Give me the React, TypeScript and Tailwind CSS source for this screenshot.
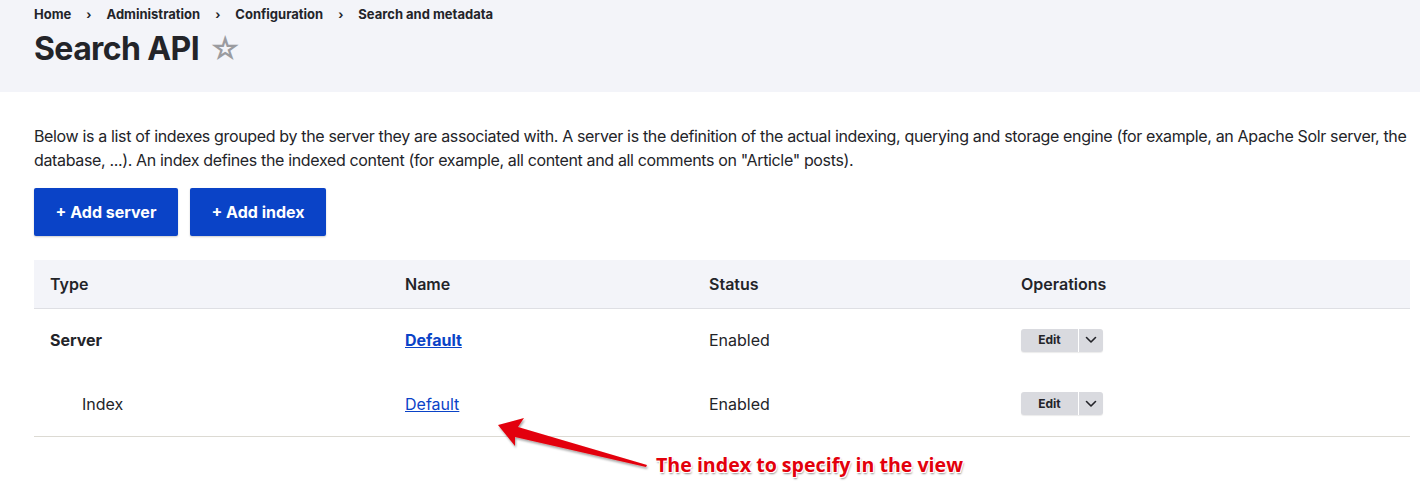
import React from 'react';

const Chevron = () => (
  <svg width="12" height="8" viewBox="0 0 12 8" fill="none">
    <path d="M1.5 1.5 6 6l4.5-4.5" stroke="#232429" strokeWidth="1.6" strokeLinecap="round" strokeLinejoin="round" />
  </svg>
);

const DropButton = () => (
  <div className="flex h-[23px] w-[82px] overflow-hidden rounded-[3px] bg-[#d9dadf] shadow-[0_1px_1px_rgba(0,0,0,0.08)]">
    <span className="flex w-[57px] items-center justify-center text-[12px] font-bold text-[#232429]">Edit</span>
    <span className="w-px bg-white" />
    <span className="flex flex-1 items-center justify-center">
      <Chevron />
    </span>
  </div>
);

const rows = [
  { type: 'Server', bold: true },
  { type: 'Index', bold: false },
];

export default function App() {
  return (
    <div className="relative h-[500px] w-[1420px] overflow-hidden bg-white font-['Inter',sans-serif] text-[#232429]">
      <div className="h-[92px] bg-[#f3f4f9] px-[34px] pt-[6px]">
        <nav className="flex items-center gap-[15px] text-[13px] font-bold leading-[17px]">
          <span>Home</span>
          <span className="text-[12px]">›</span>
          <span>Administration</span>
          <span className="text-[12px]">›</span>
          <span>Configuration</span>
          <span className="text-[12px]">›</span>
          <span>Search and metadata</span>
        </nav>
        <h1 className="mt-[6px] flex items-center text-[32px] font-bold leading-[40px] tracking-[-0.6px]">
          Search API
          <span className="ml-[10px] text-[31px] font-normal text-[#9a9ba0]">☆</span>
        </h1>
      </div>

      <div className="px-[34px] pt-[32px]">
        <p className="text-[16px] leading-[24px] tracking-[-0.35px]">
          <span className="whitespace-nowrap">
            Below is a list of indexes grouped by the server they are associated with. A server is the definition of the actual indexing, querying and storage engine (for example, an Apache Solr server, the
          </span>
          <br />
          database, ...). An index defines the indexed content (for example, all content and all comments on "Article" posts).
        </p>

        <div className="mt-[16px] flex gap-[12px]">
          <button className="h-[48px] w-[144px] rounded-[2px] bg-[#0a43c7] text-[16px] font-bold text-white shadow-[0_1px_2px_rgba(0,0,0,0.2)]">
            + Add server
          </button>
          <button className="h-[48px] w-[136px] rounded-[2px] bg-[#0a43c7] text-[16px] font-bold text-white shadow-[0_1px_2px_rgba(0,0,0,0.2)]">
            + Add index
          </button>
        </div>

        <table className="mt-[24px] w-[1376px] table-fixed border-collapse text-left text-[16px]">
          <colgroup>
            <col className="w-[355px]" />
            <col className="w-[304px]" />
            <col className="w-[312px]" />
            <col />
          </colgroup>
          <thead>
            <tr className="h-[48px] border-b border-[#dedfe4] bg-[#f3f4f9]">
              <th className="pl-[16px] font-semibold">Type</th>
              <th className="pl-[16px] font-semibold">Name</th>
              <th className="pl-[16px] font-semibold">Status</th>
              <th className="pl-[16px] font-semibold">Operations</th>
            </tr>
          </thead>
          <tbody>
            {rows.map((r) => (
              <tr key={r.type} className={r.bold ? 'h-[64px]' : 'h-[64px] border-b border-[#dcdad3]'}>
                <td className={r.bold ? 'pl-[16px] font-bold' : 'pl-[48px]'}>{r.type}</td>
                <td className="pl-[16px]">
                  <a className={r.bold ? 'font-bold text-[#0a43c7] underline' : 'text-[#0a43c7] underline'}>Default</a>
                </td>
                <td className="pl-[16px]">Enabled</td>
                <td className="pl-[16px]">
                  <DropButton />
                </td>
              </tr>
            ))}
          </tbody>
        </table>
      </div>

      <svg className="absolute left-[490px] top-[405px]" width="170" height="70" viewBox="0 0 170 70">
        <defs>
          <filter id="sh" x="-10%" y="-20%" width="130%" height="160%">
            <feDropShadow dx="1" dy="2" stdDeviation="1.2" floodColor="#000" floodOpacity="0.35" />
          </filter>
        </defs>
        <path d="M8 20 L34 13 L28 22 L157 60 L156 62 L25 32 L25 41 Z" fill="#e3000b" filter="url(#sh)" />
      </svg>

      <div
        className="absolute left-[656px] top-[452px] font-['Open_Sans',sans-serif] text-[19.6px] font-bold leading-[26px] text-[#e3000b]"
        style={{ textShadow: '-1px -1px 0 #fff, 1px -1px 0 #fff, -1px 1px 0 #fff, 1px 1px 0 #fff, 0 -1px 0 #fff, 0 1px 0 #fff, 1px 2px 2px rgba(0,0,0,0.45)' }}
      >
        The index to specify in the view
      </div>
    </div>
  );
}
